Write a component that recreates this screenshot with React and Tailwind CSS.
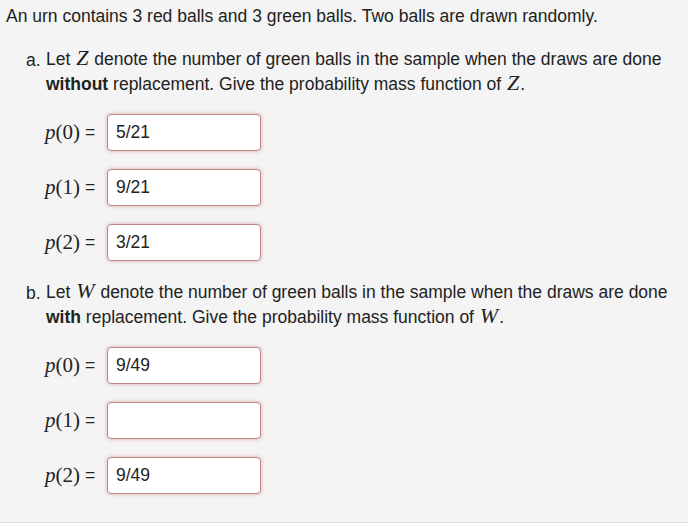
import React from "react";

const sans = { fontFamily: '"Liberation Sans", Arial, sans-serif' };
const serif = { fontFamily: '"Liberation Serif", "Times New Roman", serif' };

function M({ children }) {
  return (
    <span className="italic text-[22px] leading-none mx-[1px]" style={serif}>
      {children}
    </span>
  );
}

function Row({ n, value }) {
  return (
    <div className="flex items-center h-[37px]">
      <span className="w-[62px] flex items-center whitespace-nowrap">
        <span className="text-[21px] leading-none" style={serif}>
          <span className="italic">p</span>({n})
        </span>
        <span className="ml-[5px]">=</span>
      </span>
      <input
        readOnly
        value={value}
        className="w-[154px] h-[37px] rounded-[4px] border border-[#b98585] bg-white pl-[8px] text-[17.5px] text-[#222] outline-none shadow-[0_0_4px_rgba(215,90,90,0.45)]"
        style={sans}
      />
    </div>
  );
}

function Part({ label, letter, bold, rows }) {
  return (
    <div className="flex ml-[26px]">
      <span className="w-[20px] shrink-0">{label}</span>
      <div className="flex-1">
        <p className="leading-[25px] whitespace-nowrap">
          Let <M>{letter}</M> denote the number of green balls in the sample when the draws are done
          <br />
          <b>{bold}</b> replacement. Give the probability mass function of <M>{letter}</M>.
        </p>
        <div className="mt-[17px] -ml-[1px] flex flex-col gap-[18px]">
          {rows.map((r, i) => (
            <Row key={i} n={i} value={r} />
          ))}
        </div>
      </div>
    </div>
  );
}

export default function App() {
  return (
    <div className="min-h-screen bg-white text-[17.5px] text-[#222]" style={sans}>
      <div className="bg-[#f4f4f4] h-[523px] border-b border-[#dcdcdc] pt-[4px] overflow-hidden">
        <p className="pl-[6px] leading-[24px]">
          An urn contains 3 red balls and 3 green balls. Two balls are drawn randomly.
        </p>
        <div className="mt-[19px]">
          <Part label="a." letter="Z" bold="without" rows={["5/21", "9/21", "3/21"]} />
        </div>
        <div className="mt-[19px]">
          <Part label="b." letter="W" bold="with" rows={["9/49", "", "9/49"]} />
        </div>
      </div>
    </div>
  );
}
